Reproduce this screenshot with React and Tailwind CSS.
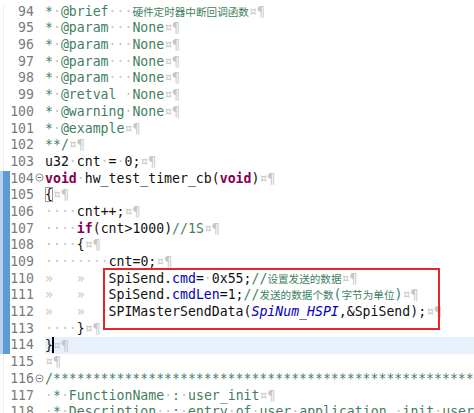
import React from 'react';

const KIND = {
  n: 'text-[#111111]',
  c: 'text-[#3f7f5f]',
  k: 'text-[#7f0055] font-bold',
  f: 'text-[#0000c0]',
  e: 'text-[#0000c0] italic',
  z: "text-[#3f7f5f] text-[10.6px] font-['Noto_Sans_CJK_SC',sans-serif]",
};

function renderSeg(text, kind, key) {
  const out = [];
  let buf = '';
  const cls = KIND[kind];
  const flush = () => {
    if (buf) {
      out.push(
        <span key={key + '-' + out.length} className={cls}>
          {buf}
        </span>
      );
      buf = '';
    }
  };
  for (const ch of text) {
    if (ch === ' ') {
      flush();
      out.push(
        <span key={key + '-' + out.length} className="text-[#c4c4c4]">
          ·
        </span>
      );
    } else if (ch === '\t') {
      flush();
      out.push(
        <span key={key + '-' + out.length} className="text-[#c4c4c4]">
          {'»   '}
        </span>
      );
    } else {
      buf += ch;
    }
  }
  flush();
  return out;
}

function Eol() {
  return <span className="text-[#c6c6c6]">¤¶</span>;
}

function FoldIcon() {
  return (
    <svg width="9" height="9" viewBox="0 0 9 9" className="mt-[-2px]">
      <circle cx="4.5" cy="4.5" r="3.6" fill="white" stroke="#8c8c8c" strokeWidth="1" />
      <line x1="2.6" y1="4.5" x2="6.4" y2="4.5" stroke="#6c6c6c" strokeWidth="1" />
    </svg>
  );
}

const lines = [
  { n: 94, segs: [['* @brief   ', 'c'], ['硬件定时器中断回调函数', 'z']] },
  { n: 95, segs: [['* @param   None', 'c']] },
  { n: 96, segs: [['* @param   None', 'c']] },
  { n: 97, segs: [['* @param   None', 'c']] },
  { n: 98, segs: [['* @param   None', 'c']] },
  { n: 99, segs: [['* @retval\u00a0 None', 'c']] },
  { n: 100, segs: [['* @warning None', 'c']] },
  { n: 101, segs: [['* @example', 'c']] },
  { n: 102, segs: [['**/', 'c']] },
  { n: 103, segs: [['u32 cnt = 0;', 'n']] },
  { n: 104, fold: true, segs: [['void', 'k'], [' hw_test_timer_cb(', 'n'], ['void', 'k'], [')', 'n']] },
  { n: 105, brace: true, segs: [] },
  { n: 106, segs: [['    cnt++;', 'n']] },
  { n: 107, segs: [['    ', 'n'], ['if', 'k'], ['(cnt>1000)', 'n'], ['//1S', 'c']] },
  { n: 108, segs: [['    {', 'n']] },
  { n: 109, segs: [['        cnt=0;', 'n']] },
  { n: 110, segs: [['\t\tSpiSend.', 'n'], ['cmd', 'f'], ['= 0x55;', 'n'], ['//', 'c'], ['设置发送的数据', 'z']] },
  {
    n: 111,
    segs: [
      ['\t\tSpiSend.', 'n'],
      ['cmdLen', 'f'],
      ['=1;', 'n'],
      ['//', 'c'],
      ['发送的数据个数', 'z'],
      ['(', 'c'],
      ['字节为单位', 'z'],
      [')', 'c'],
    ],
  },
  { n: 112, segs: [['\t\tSPIMasterSendData(', 'n'], ['SpiNum_HSPI', 'e'], [',&SpiSend);', 'n']] },
  { n: 113, segs: [['    }', 'n']] },
  { n: 114, cursor: true, segs: [] },
  { n: 115, segs: [] },
  { n: 116, fold: true, noEol: true, segs: [['/*********************************************************************', 'c']] },
  { n: 117, segs: [[' * FunctionName : user_init', 'c']] },
  { n: 118, noEol: true, segs: [[' * Description  : entry of user application, init user function here', 'c']] },
];

export default function App() {
  return (
    <div className="relative w-[474px] h-[413px] overflow-hidden bg-white font-['DejaVu_Sans_Mono',monospace] text-[13.2px] leading-[16.7px]">
      <div className="flex flex-col pt-[3.7px]">
        {lines.map((l) => {
          const inBar = l.n >= 104 && l.n <= 114;
          return (
            <div key={l.n} className="flex h-[16.7px] whitespace-pre">
              <div className="w-[10px] shrink-0 flex">
                {inBar ? (
                  <div className="w-[10px] h-full border-l-[3px] border-[#b5d1ee] bg-[#5b9bd7]" />
                ) : (
                  <div className="ml-[3px] w-[1px] h-full bg-[#efefef]" />
                )}
              </div>
              <div className="w-[24px] shrink-0 text-right text-[#7a7a7a]">{l.n}</div>
              <div className="w-[11px] shrink-0 flex items-center justify-center">
                {l.fold ? <FoldIcon /> : null}
              </div>
              <div
                className={
                  'flex-1 min-w-0 overflow-hidden ' + (l.cursor ? 'bg-[#e8f0fb]' : '')
                }
              >
                {l.brace ? (
                  <span className="outline outline-1 outline-[#9a9a9a] outline-offset-[-1px] text-[#111111]">{'{'}</span>
                ) : null}
                {l.cursor ? (
                  <>
                    <span className="text-[#111111]">{'}'}</span>
                    <span className="inline-block w-[1.5px] h-[16px] bg-black align-[-3px] ml-[-0.5px] mr-[-1px]" />
                  </>
                ) : null}
                {l.segs.map((s, i) => renderSeg(s[0], s[1], l.n + '-' + i))}
                {l.noEol ? null : <Eol />}
              </div>
            </div>
          );
        })}
      </div>
      <div className="absolute left-[103px] top-[268px] w-[337px] h-[62px] border-2 border-[#e2282a]" />
    </div>
  );
}
